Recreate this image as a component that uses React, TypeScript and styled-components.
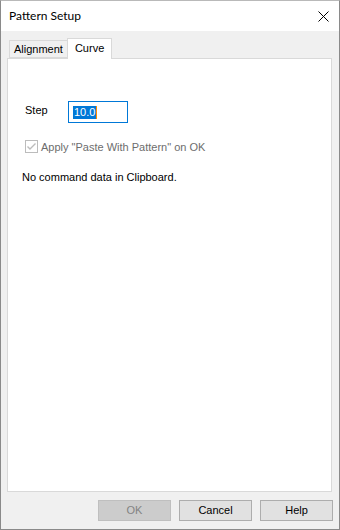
import styled, { createGlobalStyle } from "styled-components"

const GlobalStyle = createGlobalStyle`
    html, body {
        margin: 0;
        padding: 0;
        background: #ffffff;
    }
    * {
        box-sizing: border-box;
    }
`

const Window = styled.div`
    width: 340px;
    height: 530px;
    display: flex;
    flex-direction: column;
    border: 1px solid #8a8a8a;
    border-top-color: #b9b9b9;
    background: #f0f0f0;
    font-family: "Liberation Sans", Arial, sans-serif;
    font-size: 11px;
    color: #000000;
`

const TitleBar = styled.div`
    height: 30px;
    display: flex;
    align-items: center;
    justify-content: space-between;
    padding: 0 9px 0 8px;
    background: #ffffff;
    flex-shrink: 0;
`

const TitleText = styled.span`
    font-family: "Segoe UI", Lato, sans-serif;
    font-size: 12px;
    padding-bottom: 1px;
`

const CloseIcon = styled.svg`
    width: 11px;
    height: 11px;
    margin-right: 1px;
`

const Body = styled.div`
    flex: 1;
    display: flex;
    flex-direction: column;
    padding: 7px 7px 0 6px;
    min-height: 0;
`

const TabStrip = styled.div`
    height: 20px;
    display: flex;
    align-items: flex-end;
    padding-left: 2px;
    position: relative;
    z-index: 1;
`

const Tab = styled.div<{ $active?: boolean }>`
    height: ${p => (p.$active ? "21px" : "18px")};
    margin-bottom: ${p => (p.$active ? "-1px" : "0")};
    margin-left: ${p => (p.$active ? "-1px" : "0")};
    padding: ${p => (p.$active ? "0 7px 3px 7px" : "0 4px 0 4px")};
    display: flex;
    align-items: center;
    background: ${p => (p.$active ? "#ffffff" : "#f0f0f0")};
    border: 1px solid #d9d9d9;
    border-bottom: ${p => (p.$active ? "none" : "1px solid #d9d9d9")};
`

const Panel = styled.div`
    flex: 1;
    background: #ffffff;
    border: 1px solid #d9d9d9;
    display: flex;
    flex-direction: column;
    padding: 42px 17px 0 17px;
`

const FieldRow = styled.div`
    display: flex;
    align-items: center;
    height: 22px;
`

const FieldLabel = styled.span`
    width: 43px;
    padding-bottom: 5px;
`

const TextBox = styled.div`
    width: 60px;
    height: 22px;
    border: 1px solid #0078d7;
    display: flex;
    align-items: center;
    padding-left: 4px;
`

const Selection = styled.span`
    background: #0078d7;
    color: #ffffff;
    line-height: 13px;
    padding: 0 1px;
    border-right: 1px solid #ff8a00;
`

const CheckRow = styled.div`
    display: flex;
    align-items: center;
    gap: 3px;
    margin-top: 17px;
    color: #6d6d6d;
`

const CheckBox = styled.svg`
    width: 13px;
    height: 13px;
    flex-shrink: 0;
`

const InfoText = styled.div`
    margin-top: 18px;
    margin-left: -3px;
`

const Footer = styled.div`
    height: 37px;
    display: flex;
    justify-content: flex-end;
    align-items: flex-start;
    gap: 8px;
    padding-top: 8px;
    padding-right: 0;
    flex-shrink: 0;
    margin-right: -1px;
`

const DialogButton = styled.button`
    width: 73px;
    height: 21px;
    border: 1px solid #adadad;
    background: #e1e1e1;
    font-family: inherit;
    font-size: 11px;
    color: #000000;
    padding: 0 0 1px 0;
    margin: 0;

    &:disabled {
        background: #cccccc;
        border-color: #bfbfbf;
        color: #838383;
    }
`

function App() {
    return (
        <>
            <GlobalStyle />
            <Window>
                <TitleBar>
                    <TitleText>Pattern Setup</TitleText>
                    <CloseIcon viewBox="0 0 11 11">
                        <path d="M0.5 0.5 L10.5 10.5 M10.5 0.5 L0.5 10.5" stroke="#000" strokeWidth="1" fill="none" />
                    </CloseIcon>
                </TitleBar>
                <Body>
                    <TabStrip>
                        <Tab>Alignment</Tab>
                        <Tab $active>Curve</Tab>
                    </TabStrip>
                    <Panel>
                        <FieldRow>
                            <FieldLabel>Step</FieldLabel>
                            <TextBox>
                                <Selection>10.0</Selection>
                            </TextBox>
                        </FieldRow>
                        <CheckRow>
                            <CheckBox viewBox="0 0 13 13">
                                <rect x="0.5" y="0.5" width="12" height="12" fill="#ffffff" stroke="#bcbcbc" />
                                <path d="M2.5 6.5 L5 9 L10.5 3.5" stroke="#bcbcbc" strokeWidth="1.4" fill="none" />
                            </CheckBox>
                            <span>Apply "Paste With Pattern" on OK</span>
                        </CheckRow>
                        <InfoText>No command data in Clipboard.</InfoText>
                    </Panel>
                    <Footer>
                        <DialogButton disabled>OK</DialogButton>
                        <DialogButton>Cancel</DialogButton>
                        <DialogButton>Help</DialogButton>
                    </Footer>
                </Body>
            </Window>
        </>
    )
}

export default App
